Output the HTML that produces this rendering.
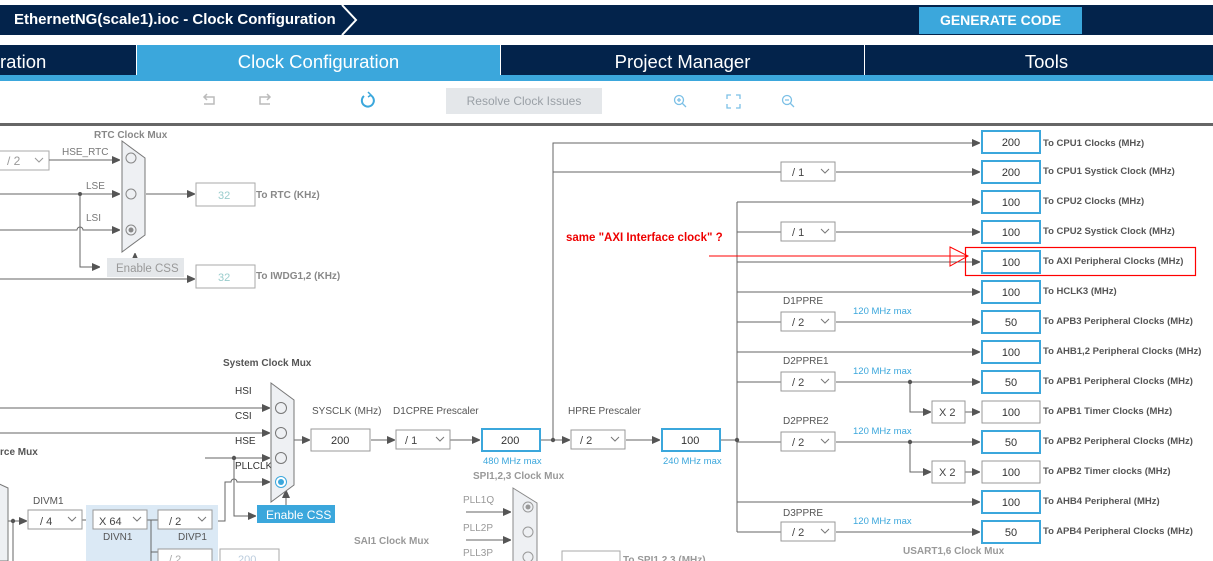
<!DOCTYPE html>
<html><head><meta charset="utf-8">
<style>
*{margin:0;padding:0;box-sizing:border-box}
body{width:1213px;height:561px;overflow:hidden;background:#fff;font-family:"Liberation Sans",sans-serif;position:relative}
.abs{position:absolute}
</style></head><body>
<div class="abs" style="left:0;top:5px;width:1213px;height:30px;background:#03234b"></div>
<div class="abs" style="left:14px;top:11px;color:#fff;font-weight:bold;font-size:15px">EthernetNG(scale1).ioc - Clock Configuration</div>
<svg class="abs" style="left:340px;top:5px" width="20" height="30"><path d="M2 0 L16 15 L2 30" stroke="#fff" stroke-width="2" fill="none"/></svg>
<div class="abs" style="left:919px;top:7px;width:163px;height:27px;background:#3ba7dc;color:#fff;font-weight:bold;font-size:14px;text-align:center;line-height:27px">GENERATE CODE</div>
<div class="abs" style="left:0;top:45px;width:1213px;height:31px;background:#03234b"></div>
<div class="abs" style="left:137px;top:45px;width:363px;height:31px;background:#3ba7dc"></div>
<div class="abs" style="left:136px;top:45px;width:1px;height:31px;background:#fff"></div>
<div class="abs" style="left:500px;top:45px;width:1px;height:31px;background:#fff"></div>
<div class="abs" style="left:864px;top:45px;width:1px;height:31px;background:#fff"></div>
<div class="abs" style="left:0;top:75px;width:1213px;height:6px;background:#3ba7dc"></div>
<div class="abs" style="left:0;top:51px;color:#fff;font-size:18.5px">ration</div>
<div class="abs" style="left:137px;top:51px;width:363px;text-align:center;color:#fff;font-size:18.5px">Clock Configuration</div>
<div class="abs" style="left:501px;top:51px;width:363px;text-align:center;color:#fff;font-size:18.5px">Project Manager</div>
<div class="abs" style="left:865px;top:51px;width:363px;text-align:center;color:#fff;font-size:18.5px">Tools</div>
<div class="abs" style="left:446px;top:88px;width:156px;height:26px;background:#e4e7ea;color:#9aa0a6;font-size:12px;text-align:center;line-height:26px">Resolve Clock Issues</div>
<div class="abs" style="left:0;top:123px;width:1213px;height:3px;background:#666"></div>
<svg class="abs" style="left:0;top:0" width="1213" height="561" font-family="Liberation Sans, sans-serif">
<defs><marker id="a" markerWidth="8" markerHeight="8" refX="8" refY="4" orient="auto" markerUnits="userSpaceOnUse"><path d="M0 0 L9 4 L0 8Z" fill="#555"/></marker></defs>
<g stroke="#bbb" stroke-width="1.5" fill="none">
<path d="M204 97 h10 v7 h-10 M207 94 l-3 3 l3 3"/>
<path d="M270 97 h-10 v7 h10 M267 94 l3 3 l-3 3"/>
</g>
<path d="M364 96 A6 6 0 1 0 370 95" stroke="#3ba7dc" stroke-width="2" fill="none"/><path d="M368 92 l3 3 l-3 2" stroke="#3ba7dc" stroke-width="1.5" fill="none"/>
<g stroke="#7cc0e6" stroke-width="1.3" fill="none">
<circle cx="679" cy="100" r="4.5"/><path d="M682 103 l4 4 M677 100h4 M679 98v4"/>
<path d="M727 99 v-4 h4 M736 95 h4 v4 M740 104 v4 h-4 M731 108 h-4 v-4"/>
<circle cx="787" cy="100" r="4.5"/><path d="M790 103 l4 4 M785 100h4"/>
</g>
<g font-size="10" fill="#777">
<text x="94" y="138" font-weight="bold" fill="#888">RTC Clock Mux</text>
<rect x="-2" y="151" width="51" height="19" fill="#fff" stroke="#aaa"/><text x="7" y="165" font-size="12" fill="#999">/ 2</text><path d="M35 158 l4 4 l4 -4" stroke="#999" fill="none"/>
<text x="62" y="155">HSE_RTC</text><text x="86" y="189">LSE</text><text x="86" y="221">LSI</text>
<g stroke="#666" fill="none">
<path d="M49 160 H120" marker-end="url(#a)"/>
<path d="M0 194 H120" marker-end="url(#a)"/>
<path d="M0 230 H77 a3 3 0 0 1 6 0 H120" marker-end="url(#a)"/>
<path d="M80 194 V267 H100" marker-end="url(#a)"/>
<path d="M135 268 V253" marker-end="url(#a)"/>
<path d="M146 194 H195" marker-end="url(#a)"/>
<path d="M0 279 H195" marker-end="url(#a)"/>
</g>
<circle cx="80" cy="194" r="2" fill="#555"/>
<path d="M122 141 L145 158 V235 L122 252 Z" fill="#eef0f3" stroke="#777"/>
<g fill="none" stroke="#888"><circle cx="131" cy="158" r="5"/><circle cx="131" cy="194" r="5"/><circle cx="131" cy="230" r="5"/></g><circle cx="131" cy="230" r="2.5" fill="#888"/>
<rect x="107" y="258" width="77" height="19" fill="#e4e7ea"/><text x="116" y="272" font-size="11.5" fill="#999">Enable CSS</text>
<rect x="196" y="183" width="59" height="23" fill="#fff" stroke="#aaa"/><text x="218" y="199" font-size="11" fill="#9cc">32</text><text x="256" y="198" font-weight="bold" fill="#888">To RTC (KHz)</text>
<rect x="196" y="265" width="59" height="23" fill="#fff" stroke="#aaa"/><text x="218" y="281" font-size="11" fill="#9cc">32</text><text x="256" y="279" font-weight="bold" fill="#888">To IWDG1,2 (KHz)</text>
<text x="223" y="366" font-weight="bold" fill="#555">System Clock Mux</text>
<text x="235" y="394" fill="#333">HSI</text><text x="235" y="419" fill="#333">CSI</text><text x="235" y="444" fill="#333">HSE</text><text x="235" y="469" fill="#333">PLLCLK</text>
<g stroke="#666" fill="none">
<path d="M0 408 H270" marker-end="url(#a)"/>
<path d="M0 433 H270" marker-end="url(#a)"/>
<path d="M205 458 H270" marker-end="url(#a)"/>
<path d="M213 521 H225 V482 H231 a3 3 0 0 1 6 0 H270" marker-end="url(#a)"/>
<path d="M234 458 V516 H256" marker-end="url(#a)"/>
<path d="M286 505 V490" marker-end="url(#a)"/>
<path d="M294 440 H310" marker-end="url(#a)"/>
<path d="M371 440 H395" marker-end="url(#a)"/>
<path d="M450 440 H480" marker-end="url(#a)"/>
<path d="M541 440 H570" marker-end="url(#a)"/>
<path d="M626 440 H660" marker-end="url(#a)"/>
<path d="M553 440 V143 H980" marker-end="url(#a)"/>
<path d="M553 172 H781 M836 172 H980" marker-end="url(#a)"/>
<path d="M721 440 H737 M737 202 V532"/>
<path d="M737 202 H980" marker-end="url(#a)"/>
<path d="M737 232 H781 M836 232 H980" marker-end="url(#a)"/>
<path d="M737 262 H980" marker-end="url(#a)"/>
<path d="M737 292 H980" marker-end="url(#a)"/>
<path d="M737 322 H781 M836 322 H980" marker-end="url(#a)"/>
<path d="M737 352 H980" marker-end="url(#a)"/>
<path d="M737 382 H781 M836 382 H980" marker-end="url(#a)"/>
<path d="M910 382 V412 H931" marker-end="url(#a)"/>
<path d="M965 412 H980" marker-end="url(#a)"/>
<path d="M737 442 H781 M836 442 H980" marker-end="url(#a)"/>
<path d="M910 442 V472 H931" marker-end="url(#a)"/>
<path d="M965 472 H980" marker-end="url(#a)"/>
<path d="M737 502 H980" marker-end="url(#a)"/>
<path d="M737 532 H781 M836 532 H980" marker-end="url(#a)"/>
<path d="M0 521 H27" marker-end="url(#a)"/>
<path d="M13 521 V561 M82 520 H93"/>
<path d="M466 512 H511" marker-end="url(#a)"/>
<path d="M466 540 H511" marker-end="url(#a)"/>
</g>
<g fill="#555"><circle cx="234" cy="458" r="2.2"/><circle cx="553" cy="440" r="2.2"/><circle cx="737" cy="440" r="2.2"/><circle cx="910" cy="382" r="2.2"/><circle cx="910" cy="442" r="2.2"/><circle cx="13" cy="521" r="2.2"/></g>
<path d="M271 383 L294 400 V485 L271 502 Z" fill="#eef0f3" stroke="#777"/>
<g fill="none" stroke="#777"><circle cx="281" cy="408" r="5.5"/><circle cx="281" cy="433" r="5.5"/><circle cx="281" cy="458" r="5.5"/></g>
<circle cx="281" cy="482" r="5.5" fill="#fff" stroke="#3ba7dc"/><circle cx="281" cy="482" r="3" fill="#3ba7dc"/>
<rect x="257" y="505" width="78" height="18" fill="#3ba7dc"/><text x="266" y="519" font-size="12" fill="#fff">Enable CSS</text>
<text x="312" y="414" fill="#555">SYSCLK (MHz)</text><text x="393" y="414" fill="#555">D1CPRE Prescaler</text><text x="568" y="414" fill="#555">HPRE Prescaler</text>
<rect x="311" y="429" width="59" height="22" fill="#fff" stroke="#999"/><text x="331" y="444" font-size="11" fill="#333">200</text>
<rect x="396" y="430" width="54" height="19" fill="#fff" stroke="#999"/><text x="405" y="444" font-size="11" fill="#444">/ 1</text><path d="M436 437 l4 4 l4 -4" stroke="#777" fill="none"/>
<rect x="482" y="429" width="58" height="22" fill="#fff" stroke="#3ba7dc" stroke-width="2"/><text x="501" y="444" font-size="11" fill="#333">200</text>
<text x="483" y="464" font-size="9.5" fill="#3ba7dc">480 MHz max</text>
<rect x="571" y="430" width="54" height="19" fill="#fff" stroke="#999"/><text x="580" y="444" font-size="11" fill="#444">/ 2</text><path d="M611 437 l4 4 l4 -4" stroke="#777" fill="none"/>
<rect x="662" y="429" width="58" height="22" fill="#fff" stroke="#3ba7dc" stroke-width="2"/><text x="681" y="444" font-size="11" fill="#333">100</text>
<text x="663" y="464" font-size="9.5" fill="#3ba7dc">240 MHz max</text>
<g font-size="11" fill="#444">
<rect x="781" y="162" width="54" height="19" fill="#fff" stroke="#999"/><text x="792" y="176">/ 1</text>
<rect x="781" y="222" width="54" height="19" fill="#fff" stroke="#999"/><text x="792" y="236">/ 1</text>
<rect x="781" y="312" width="54" height="19" fill="#fff" stroke="#999"/><text x="792" y="326">/ 2</text>
<rect x="781" y="372" width="54" height="19" fill="#fff" stroke="#999"/><text x="792" y="386">/ 2</text>
<rect x="781" y="432" width="54" height="19" fill="#fff" stroke="#999"/><text x="792" y="446">/ 2</text>
<rect x="781" y="522" width="54" height="19" fill="#fff" stroke="#999"/><text x="792" y="536">/ 2</text>
</g>
<g stroke="#777" fill="none"><path d="M821 169 l4 4 l4 -4 M821 229 l4 4 l4 -4 M821 319 l4 4 l4 -4 M821 379 l4 4 l4 -4 M821 439 l4 4 l4 -4 M821 529 l4 4 l4 -4"/></g>
<text x="783" y="304" fill="#555">D1PPRE</text><text x="783" y="364" fill="#555">D2PPRE1</text><text x="783" y="424" fill="#555">D2PPRE2</text><text x="783" y="516" fill="#555">D3PPRE</text>
<g font-size="9.5" fill="#3ba7dc"><text x="853" y="314">120 MHz max</text><text x="853" y="374">120 MHz max</text><text x="853" y="434">120 MHz max</text><text x="853" y="524">120 MHz max</text></g>
<rect x="932" y="401" width="33" height="22" fill="#fff" stroke="#999"/><text x="939" y="416" font-size="11" fill="#444">X 2</text>
<rect x="932" y="461" width="33" height="22" fill="#fff" stroke="#999"/><text x="939" y="476" font-size="11" fill="#444">X 2</text>
<g fill="#fff" stroke="#3ba7dc" stroke-width="2">
<rect x="982" y="131" width="58" height="22"/><rect x="982" y="161" width="58" height="22"/><rect x="982" y="191" width="58" height="22"/><rect x="982" y="221" width="58" height="22"/><rect x="982" y="251" width="58" height="22"/><rect x="982" y="281" width="58" height="22"/><rect x="982" y="311" width="58" height="22"/><rect x="982" y="341" width="58" height="22"/><rect x="982" y="371" width="58" height="22"/><rect x="982" y="431" width="58" height="22"/><rect x="982" y="491" width="58" height="22"/><rect x="982" y="521" width="58" height="22"/>
</g>
<g fill="#fff" stroke="#999"><rect x="982" y="401" width="58" height="22"/><rect x="982" y="461" width="58" height="22"/></g>
<g font-size="11" fill="#333" text-anchor="middle">
<text x="1011" y="146">200</text><text x="1011" y="176">200</text><text x="1011" y="206">100</text><text x="1011" y="236">100</text><text x="1011" y="266">100</text><text x="1011" y="296">100</text><text x="1011" y="326">50</text><text x="1011" y="356">100</text><text x="1011" y="386">50</text><text x="1011" y="416">100</text><text x="1011" y="446">50</text><text x="1011" y="476">100</text><text x="1011" y="506">100</text><text x="1011" y="536">50</text>
</g>
<g font-size="9.5" font-weight="bold" fill="#555">
<text x="1043" y="146">To CPU1 Clocks (MHz)</text><text x="1043" y="174">To CPU1 Systick Clock (MHz)</text><text x="1043" y="204">To CPU2 Clocks (MHz)</text><text x="1043" y="234">To CPU2 Systick Clock (MHz)</text><text x="1043" y="264">To AXI Peripheral Clocks (MHz)</text><text x="1043" y="294">To HCLK3 (MHz)</text><text x="1043" y="324">To APB3 Peripheral Clocks (MHz)</text><text x="1043" y="354">To AHB1,2 Peripheral Clocks (MHz)</text><text x="1043" y="384">To APB1 Peripheral Clocks (MHz)</text><text x="1043" y="414">To APB1 Timer Clocks (MHz)</text><text x="1043" y="444">To APB2 Peripheral Clocks (MHz)</text><text x="1043" y="474">To APB2 Timer clocks (MHz)</text><text x="1043" y="504">To AHB4 Peripheral (MHz)</text><text x="1043" y="534">To APB4 Peripheral Clocks (MHz)</text>
</g>
<text x="566" y="241" font-size="11.5" font-weight="bold" fill="#e00">same "AXI Interface clock" ?</text>
<path d="M709 256 H968" stroke="red"/>
<path d="M950 247 L968 256 L950 266 Z" fill="none" stroke="red"/>
<rect x="965.5" y="247.5" width="230" height="28" fill="none" stroke="red" stroke-width="1.2"/>
<text x="903" y="554" font-weight="bold" fill="#999">USART1,6 Clock Mux</text>
<text x="0" y="455" font-weight="bold" fill="#555">rce Mux</text>
<path d="M-5 482 L8 488 V561 H-5Z" fill="#eef0f3" stroke="#777"/>
<rect x="86" y="505" width="132" height="60" fill="#dbe9f5"/>
<path d="M147 520 H158 M151 520 V561 M151 552 H158" stroke="#666" fill="none"/>
<text x="33" y="504" fill="#555">DIVM1</text><text x="103" y="540" fill="#555">DIVN1</text><text x="178" y="540" fill="#555">DIVP1</text>
<g font-size="11" fill="#444">
<rect x="28" y="510" width="54" height="19" fill="#fff" stroke="#999"/><text x="40" y="525">/ 4</text>
<rect x="93" y="510" width="54" height="19" fill="#fff" stroke="#999"/><text x="99" y="525">X 64</text>
<rect x="158" y="510" width="54" height="19" fill="#fff" stroke="#999"/><text x="169" y="525">/ 2</text>
<rect x="158" y="549" width="54" height="19" fill="#fff" stroke="#999"/><text x="169" y="563" fill="#aaa">/ 2</text>
<rect x="220" y="549" width="59" height="20" fill="#fff" stroke="#aaa"/><text x="238" y="563" fill="#bcd">200</text>
</g>
<path d="M68 517 l4 4 l4 -4 M133 517 l4 4 l4 -4 M198 517 l4 4 l4 -4" stroke="#777" fill="none"/>
<text x="473" y="479" font-weight="bold" fill="#999">SPI1,2,3 Clock Mux</text>
<text x="463" y="503" fill="#999">PLL1Q</text><text x="463" y="531" fill="#999">PLL2P</text><text x="463" y="556" fill="#999">PLL3P</text>
<text x="354" y="544" font-weight="bold" fill="#999">SAI1 Clock Mux</text>
<path d="M513 488 L537 503 V565 H513 Z" fill="#eef0f3" stroke="#888"/>
<g fill="none" stroke="#999"><circle cx="528" cy="507" r="5"/><circle cx="528" cy="532" r="5"/><circle cx="528" cy="557" r="5"/></g><circle cx="528" cy="507" r="2.5" fill="#999"/>
<rect x="562" y="551" width="58" height="20" fill="#fff" stroke="#aaa"/>
<text x="623" y="563" font-weight="bold" fill="#999">To SPI1,2,3 (MHz)</text>
</g>
</svg>
</body></html>
